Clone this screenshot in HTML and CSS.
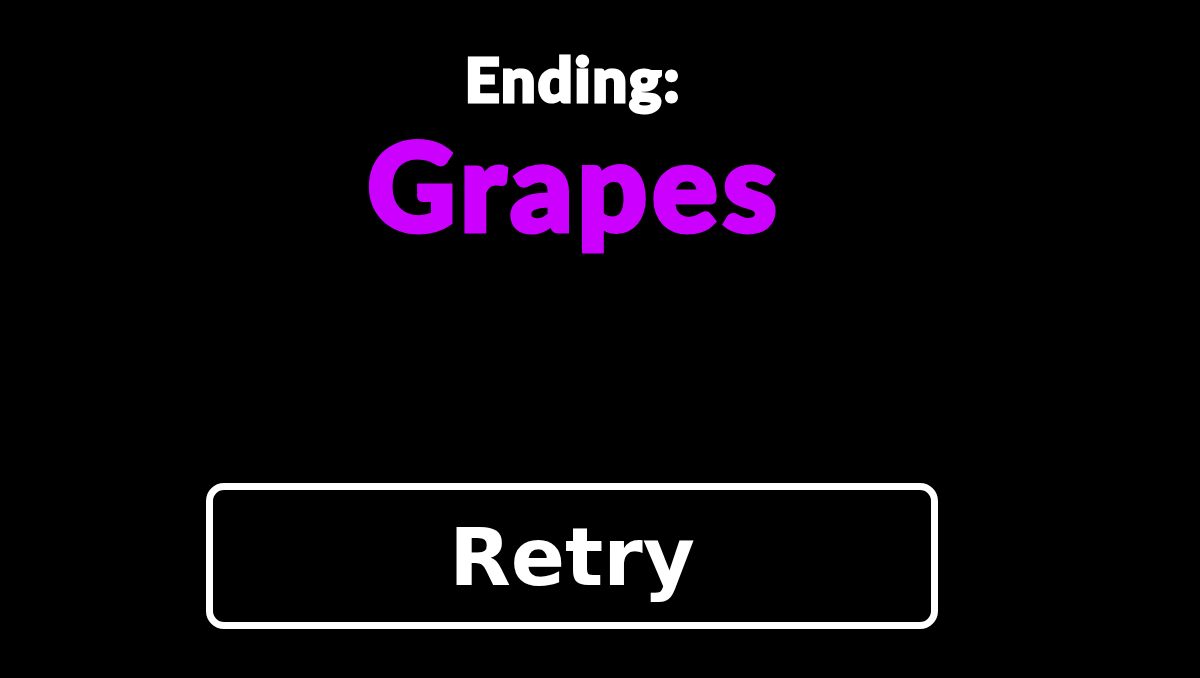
FILE: index.html
```html
<!DOCTYPE html>
<html lang="en">
<head>
    <meta charset="UTF-8">
    <meta name="viewport" content="width=device-width, initial-scale=1.0">
    <title>Ending</title>
    <link rel="stylesheet" href="styles.css">
</head>
<body>
    <div class="end-screen">
        <div class="result">
            <div class="result-label">Ending:</div>
            <div class="result-name">Grapes</div>
        </div>
        <button class="retry-button">Retry</button>
    </div>
</body>
</html>
```

FILE: styles.css
```css
body {
    margin: 0;
    height: 100vh;
    background-color: #000;
    color: #fff;
    font-family: Lato, "Noto Sans", sans-serif;
    overflow: hidden;
}
.end-screen {
    display: flex;
    flex-direction: column;
    align-items: center;
    height: 100%;
    padding-right: 56px;
}
.result {
    display: flex;
    flex-direction: column;
    align-items: center;
    padding-top: 48px;
}
.result-label {
    font-size: 61px;
    font-weight: 900;
    line-height: 1;
    letter-spacing: 2px;
    margin-right: -2px;
    -webkit-text-stroke: 3px #fff;
    paint-order: stroke fill;
}
.result-name {
    margin-top: 14px;
    margin-right: -5px;
    font-size: 122px;
    font-weight: 900;
    line-height: 1;
    letter-spacing: 5px;
    color: #cc00ff;
    -webkit-text-stroke: 5px #cc00ff;
    paint-order: stroke fill;
}
.retry-button {
    display: flex;
    justify-content: center;
    align-items: center;
    box-sizing: border-box;
    width: 732px;
    height: 146px;
    margin-top: auto;
    margin-bottom: 49px;
    padding: 2px 0 0 0;
    border: 7px solid #fff;
    border-radius: 18px;
    background-color: #000;
    color: #fff;
    font-family: "DejaVu Sans", sans-serif;
    font-size: 80px;
    font-weight: 700;
    cursor: pointer;
}
```
